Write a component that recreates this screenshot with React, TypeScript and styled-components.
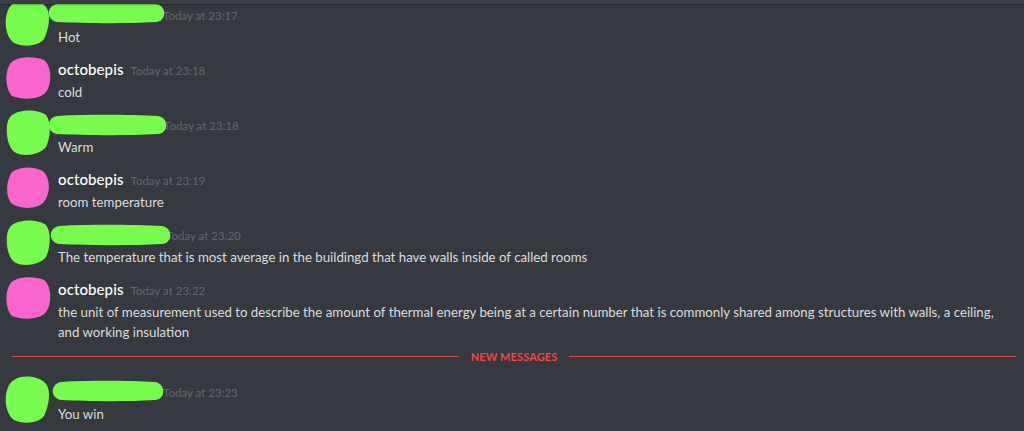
import React from "react";
import styled, { createGlobalStyle } from "styled-components";

const Global = createGlobalStyle`
  html, body { margin: 0; padding: 0; background: #36393f; }
  body { font-family: Lato, "Open Sans", sans-serif; overflow: hidden; }
`;

const Chat = styled.div`
  position: relative;
  width: 1024px;
  height: 431px;
  background: #36393f;
  overflow: hidden;
  &::before {
    content: "";
    position: absolute;
    left: 0; right: 0; top: 0;
    height: 4px;
    background: #393c42;
    box-shadow: 0 1px 0 rgba(0,0,0,0.18), 0 2px 2px rgba(0,0,0,0.08);
    z-index: 2;
  }
`;

const Group = styled.div`
  display: grid;
  grid-template-columns: 58px 1fr;
  padding: 4px 20px 8px 0;
  position: relative;
`;

const AvatarCell = styled.div`
  position: relative;
  height: 41px;
`;

const AvatarSvg = styled.svg`
  position: absolute;
  left: 4px;
  top: -5px;
  overflow: visible;
`;

const Body = styled.div`
  display: flex;
  flex-direction: column;
`;

const Header = styled.div`
  display: flex;
  align-items: center;
  height: 20px;
  position: relative;
`;

const Name = styled.span`
  color: #ffffff;
  font-size: 15px;
  font-weight: 500;
  letter-spacing: 0.1px;
`;

const Stamp = styled.span<{ $ml: number }>`
  color: #62666c;
  font-size: 11.5px;
  margin-left: ${(p) => p.$ml}px;
  position: relative;
  top: 1px;
`;

const Scribble = styled.svg`
  position: absolute;
  z-index: 1;
  overflow: visible;
`;

const Text = styled.div`
  color: #dcddde;
  font-size: 13.25px;
  line-height: 20px;
  margin-top: 3px;
  max-width: 960px;
`;

const Divider = styled.div`
  display: flex;
  align-items: center;
  gap: 12px;
  margin: 0 8px 15px 12px;
  height: 12px;
`;

const Line = styled.div`
  flex: 1;
  height: 1px;
  background: #d5484b;
`;

const DividerLabel = styled.span`
  color: #f04747;
  font-size: 11px;
  font-weight: 700;
  letter-spacing: 0.1px;
`;

const GREEN = "#78fb4e";
const PINK = "#fa64cf";

function Avatar({ d, color }: { d: string; color: string }) {
  return (
    <AvatarSvg width="46" height="48" viewBox="0 0 46 48">
      <path d={d} fill={color} />
    </AvatarSvg>
  );
}

const greenA = "M10 4 C18 -2 36 0 42 8 C48 16 44 32 40 40 C34 48 18 48 10 44 C2 38 0 24 3 14 C5 8 7 6 10 4 Z";
const greenB = "M8 6 C16 0 34 0 42 6 C48 14 46 30 42 38 C36 46 20 48 12 44 C4 40 2 26 3 16 C4 10 6 8 8 6 Z";
const pinkA = "M6 10 C12 2 30 2 40 6 C48 12 48 30 42 38 C36 46 18 46 8 42 C2 36 0 20 6 10 Z";
const pinkB = "M8 8 C16 2 32 2 40 8 C47 16 46 30 40 38 C32 46 16 45 8 40 C2 34 1 18 8 8 Z";

function GreenBar({ left, width, top }: { left: number; width: number; top: number }) {
  return (
    <Scribble width={width} height="22" viewBox={`0 0 ${width} 22`} style={{ left, top }}>
      <path
        d={`M9 2 C${width * 0.4} 0 ${width * 0.7} 1 ${width - 10} 2 C${width + 1} 4 ${width + 1} 19 ${width - 10} 20 C${width * 0.6} 22 ${width * 0.3} 21 9 20 C-2 18 -2 4 9 2 Z`}
        fill={GREEN}
      />
    </Scribble>
  );
}

type Msg = {
  kind: "green" | "pink";
  time: string;
  lines: string;
  avatar: string;
  bar?: { left: number; width: number; top: number };
  stampMl: number;
};

const msgs: Msg[] = [
  { kind: "green", time: "Today at 23:17", lines: "Hot", avatar: greenA, bar: { left: -10, width: 118, top: -2 }, stampMl: 105 },
  { kind: "pink", time: "Today at 23:18", lines: "cold", avatar: pinkA, stampMl: 7 },
  { kind: "green", time: "Today at 23:18", lines: "Warm", avatar: greenB, bar: { left: -10, width: 120, top: 0 }, stampMl: 106 },
  { kind: "pink", time: "Today at 23:19", lines: "room temperature", avatar: pinkB, stampMl: 7 },
  { kind: "green", time: "Today at 23:20", lines: "The temperature that is most average in the buildingd that have walls inside of called rooms", avatar: greenB, bar: { left: -8, width: 122, top: 0 }, stampMl: 108 },
  { kind: "pink", time: "Today at 23:22", lines: "the unit of measurement used to describe the amount of thermal energy being at a certain number that is commonly shared among structures with walls, a ceiling, and working insulation", avatar: pinkA, stampMl: 7 },
];

function Message({ m }: { m: Msg }) {
  return (
    <Group>
      <AvatarCell>
        <Avatar d={m.avatar} color={m.kind === "green" ? GREEN : PINK} />
      </AvatarCell>
      <Body>
        <Header>
          {m.kind === "pink" ? <Name>octobepis</Name> : null}
          {m.bar ? <GreenBar {...m.bar} /> : null}
          <Stamp $ml={m.stampMl}>{m.time}</Stamp>
        </Header>
        <Text>{m.lines}</Text>
      </Body>
    </Group>
  );
}

export default function App() {
  return (
    <>
      <Global />
      <Chat>
        {msgs.map((m, i) => (
          <Message key={i} m={m} />
        ))}
        <Divider>
          <Line />
          <DividerLabel>NEW MESSAGES</DividerLabel>
          <Line />
        </Divider>
        <Message
          m={{ kind: "green", time: "Today at 23:23", lines: "You win", avatar: greenA, bar: { left: -6, width: 113, top: -1 }, stampMl: 105 }}
        />
      </Chat>
    </>
  );
}
